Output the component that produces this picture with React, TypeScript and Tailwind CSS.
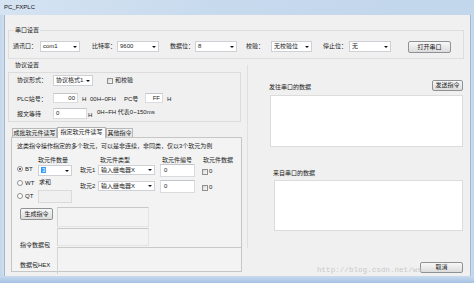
import React from "react";

const txt = "text-[6px] leading-[7px] text-[#1b1b1b] whitespace-nowrap";

function Combo({ className = "", children }: { className?: string; children?: React.ReactNode }) {
  return (
    <div className={"flex items-center justify-between bg-white border border-[#cdd0d4] pl-[2px] pr-[2px] " + className}>
      <span className={txt}>{children}</span>
      <span className="w-0 h-0 border-l-[2px] border-r-[2px] border-t-[2px] border-l-transparent border-r-transparent border-t-[#111]" />
    </div>
  );
}

function Btn({ className = "", children }: { className?: string; children?: React.ReactNode }) {
  return (
    <div className={"flex items-center justify-center border border-[#8f9295] rounded-[2px] bg-linear-to-b from-[#f8f8f8] to-[#dcdcdc] " + txt + " " + className}>
      {children}
    </div>
  );
}

function TBox({ className = "", children }: { className?: string; children?: React.ReactNode }) {
  return (
    <div className={"flex items-center bg-white border border-[#d9dbde] border-t-[#c3c6ca] " + txt + " " + className}>
      {children}
    </div>
  );
}

function Check() {
  return <div className="w-[6px] h-[6px] border border-[#8e8f8f] bg-linear-to-br from-[#d8d8d8] to-[#fbfbfb]" />;
}

function Radio({ on = false }: { on?: boolean }) {
  return (
    <div className="w-[6px] h-[6px] rounded-full border border-[#8e8f8f] bg-white flex items-center justify-center">
      {on && <div className="w-[2px] h-[2px] rounded-full bg-[#2a2a2a]" />}
    </div>
  );
}

function RO({ className = "" }: { className?: string }) {
  return <div className={"border border-[#e4e4e4] border-t-[#c9c9c9] border-l-[#d4d4d4] " + className} />;
}

function Lbl({ className = "", children }: { className?: string; children?: React.ReactNode }) {
  return <span className={txt + " " + className}>{children}</span>;
}

export default function App() {
  return (
    <div className="w-[474px] h-[283px] overflow-hidden relative bg-[#bcd2ea] font-['Liberation_Sans','Noto_Sans_CJK_SC',sans-serif]">
      {/* title bar */}
      <div className="h-[15px] flex items-center pl-[4px] bg-linear-to-r from-[#d5e3f2] via-[#c6d9ed] to-[#c2d6ec]">
        <span className="text-[6px] leading-[7px] text-[#111]">PC_FXPLC</span>
      </div>
      <div className="flex h-[261px]">
        <div className="w-[5px] bg-linear-to-r from-[#c3d6eb] to-[#cfdef0] border-r border-[#a3b6cb]" />
        <div className="w-[465px] bg-[#f0f0f0] flex flex-col">
          {/* 串口设置 group */}
          <div className="mt-[15px] ml-[3px] w-[456px] h-[29px] border border-[#dedede] flex flex-col">
            <div className="-mt-[4px] ml-[5px] px-[1px] bg-[#f0f0f0] w-fit h-[7px] flex">
              <Lbl>串口设置</Lbl>
            </div>
            <div className="mt-[7px] pl-[4px] flex items-start h-[12px]">
              <Lbl className="w-[27px] mt-[2px]">通讯口：</Lbl>
              <Combo className="w-[40px] h-[11px]">com1</Combo>
              <Lbl className="w-[25px] ml-[12px] mt-[2px]">比特率：</Lbl>
              <Combo className="w-[42px] h-[11px]">9600</Combo>
              <Lbl className="w-[25px] ml-[11px] mt-[2px]">数据位：</Lbl>
              <Combo className="w-[42px] h-[11px]">8</Combo>
              <Lbl className="w-[25px] ml-[9px] mt-[2px]">校验：</Lbl>
              <Combo className="w-[41px] h-[11px]">无校验位</Combo>
              <Lbl className="w-[26px] ml-[11px] mt-[2px]">停止位：</Lbl>
              <Combo className="w-[42px] h-[11px]">无</Combo>
              <Btn className="ml-[17px] w-[43px] h-[12px]">打开串口</Btn>
            </div>
          </div>

          <div className="flex flex-1">
            {/* left column */}
            <div className="w-[234px] ml-[3px] flex flex-col">
              <div className="pl-[7px] mt-[3px] h-[7px] flex">
                <Lbl>协议设置</Lbl>
              </div>
              <div className="mt-[3px] w-[233px] h-[50px] border border-[#dcdcdc] pl-[8px] pt-[2px] flex flex-col">
                <div className="flex items-start h-[11px]">
                  <Lbl className="w-[36px] mt-[2px]">协议形式：</Lbl>
                  <Combo className="w-[40px] h-[11px]">协议格式1</Combo>
                  <div className="ml-[14px] mt-[3px]">
                    <Check />
                  </div>
                  <Lbl className="ml-[2px] mt-[2px]">和校验</Lbl>
                </div>
                <div className="mt-[7px] flex items-start h-[10px]">
                  <Lbl className="w-[36px] mt-[3px]">PLC站号：</Lbl>
                  <TBox className="w-[25px] h-[10px] justify-end pr-[2px]">00</TBox>
                  <Lbl className="w-[8px] ml-[4px] mt-[3px]">H</Lbl>
                  <Lbl className="w-[34px] mt-[3px]">00H~0FH</Lbl>
                  <Lbl className="w-[21px] mt-[3px]">PC号</Lbl>
                  <TBox className="w-[18px] h-[10px] justify-end pr-[2px]">FF</TBox>
                  <Lbl className="ml-[4px] mt-[3px]">H</Lbl>
                </div>
                <div className="mt-[5px] flex items-start h-[11px]">
                  <Lbl className="w-[36px] mt-[3px]">报文等待</Lbl>
                  <TBox className="w-[34px] h-[11px] pl-[2px]">0</TBox>
                  <Lbl className="w-[10px] pl-[1px] mt-[4px]">H</Lbl>
                  <Lbl className="mt-[1px]">0H~FH 代表0~150ms</Lbl>
                </div>
              </div>

              {/* tabs */}
              <div className="mt-[5px] h-[10px] pl-[4px] flex items-end">
                <div className={"w-[45px] h-[9px] border border-b-0 border-[#b8b8b8] bg-linear-to-b from-[#f4f4f4] to-[#e3e3e3] flex items-center justify-center " + txt}>
                  成批软元件读写
                </div>
                <div className={"relative w-[49px] h-[11px] -mb-[1px] border border-b-0 border-[#b0b0b0] bg-[#fbfbfb] flex items-start pt-[1px] justify-center " + txt}>
                  指定软元件读写
                </div>
                <div className={"w-[27px] h-[9px] border border-b-0 border-[#b8b8b8] bg-linear-to-b from-[#f4f4f4] to-[#e3e3e3] flex items-center justify-center " + txt}>
                  其他指令
                </div>
              </div>
              <div className="ml-[3px] w-[231px] h-[135px] border border-[#c6c6c6] bg-[#f3f3f3] flex flex-col">
                <div className="pl-[5px] pt-[5px] h-[12px] flex">
                  <Lbl>这类指令操作指定的多个软元，可以是非连续，非同类，仅以3个软元为例</Lbl>
                </div>
                <div className="mt-[7px] pl-[26px] h-[7px] flex">
                  <Lbl className="w-[62px]">软元件数量</Lbl>
                  <Lbl className="w-[62px]">软元件类型</Lbl>
                  <Lbl className="w-[41px]">软元件编号</Lbl>
                  <Lbl>软元件数据</Lbl>
                </div>
                <div className="flex h-[39px]">
                  <div className="w-[26px] pl-[5px] flex flex-col">
                    <div className="mt-[2px] h-[6px] flex items-center gap-[2px]">
                      <Radio on />
                      <Lbl>BT</Lbl>
                    </div>
                    <div className="mt-[8px] h-[6px] flex items-center gap-[2px]">
                      <Radio />
                      <Lbl>WT</Lbl>
                    </div>
                    <div className="mt-[7px] h-[6px] flex items-center gap-[2px]">
                      <Radio />
                      <Lbl>QT</Lbl>
                    </div>
                  </div>
                  <div className="w-[34px] flex flex-col">
                    <Combo className="mt-[1px] w-[34px] h-[11px]">
                      <span className="bg-[#3399ff] text-white px-[1px]">3</span>
                    </Combo>
                    <Lbl className="mt-[3px] pl-[1px] h-[7px]">求和</Lbl>
                    <div className="mt-[4px] w-[34px] h-[13px] border border-[#dadada] bg-[#f0f0f0]" />
                  </div>
                  <div className="ml-[8px] flex flex-col">
                    {["软元1", "软元2"].map((n, i) => (
                      <div key={n} className={(i === 0 ? "" : "mt-[3px] ") + "flex items-start h-[13px]"}>
                        <Lbl className="w-[18px] mt-[3px]">{n}</Lbl>
                        <Combo className="mt-[1px] w-[57px] h-[10px]">输入继电器X</Combo>
                        <TBox className="ml-[5px] w-[35px] h-[13px] pl-[3px]">0</TBox>
                        <div className="ml-[7px] mt-[5px]">
                          <Check />
                        </div>
                        <Lbl className="ml-[1px] mt-[4px]">0</Lbl>
                      </div>
                    ))}
                  </div>
                </div>
                {/* lower section */}
                <div className="mt-[4px] flex h-[20px]">
                  <Btn className="ml-[8px] mt-[1px] w-[33px] h-[12px]">生成指令</Btn>
                  <RO className="ml-[4px] w-[92px] h-[20px]" />
                </div>
                <div className="mt-[1px] flex h-[18px]">
                  <div className="w-[45px] pl-[8px] pt-[2px]">
                    <Lbl>指令数据包</Lbl>
                  </div>
                  <RO className="w-[92px] h-[18px]" />
                </div>
                <div className="mt-[1px] flex flex-1">
                  <div className="w-[45px] pl-[8px] pt-[3px]">
                    <Lbl>数据包HEX</Lbl>
                  </div>
                  <RO className="flex-1 h-full border-r-0 border-b-0" />
                </div>
              </div>
            </div>

            {/* right column */}
            <div className="ml-[5px] flex-1 pr-[7px] flex flex-col">
              <div className="mt-[6px] h-[183px] border-l border-[#e0e0e0] pl-[21px] flex flex-col">
                <div className="mt-[15px] h-[11px] flex items-start justify-between">
                  <Lbl className="mt-[4px]">发往串口的数据</Lbl>
                  <Btn className="w-[31px] h-[11px]">发送指令</Btn>
                </div>
                <div className="mt-[4px] ml-[1px] h-[52px] bg-white border border-[#dcdcdc]" />
                <Lbl className="mt-[23px] ml-[4px] h-[7px]">来自串口的数据</Lbl>
                <div className="mt-[3px] ml-[5px] h-[51px] bg-white border border-[#dcdcdc]" />
              </div>
              <Btn className="mt-[14px] self-end w-[43px] h-[11px]">取消</Btn>
            </div>
          </div>
        </div>
        <div className="w-[4px] bg-linear-to-r from-[#cfdef0] to-[#bcd1e9] border-l border-[#a3b6cb]" />
      </div>
      <div className="h-[7px] bg-linear-to-b from-[#c8daee] to-[#a6c2e3]" />
      <div className="absolute left-[317px] top-[266px] text-[7.6px] leading-[9px] text-[#c9c9c9] font-['Liberation_Mono',monospace] whitespace-nowrap">
        http://blog.csdn.net/ws
      </div>
    </div>
  );
}
